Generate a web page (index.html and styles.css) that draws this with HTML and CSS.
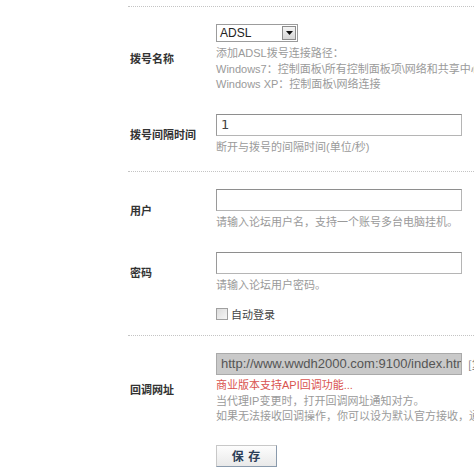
FILE: index.html
```html
<!DOCTYPE html>
<html lang="zh-CN">
<head>
<meta charset="utf-8">
<title>设置</title>
<link rel="stylesheet" href="styles.css">
</head>
<body>
<div class="page">
  <div class="section">
    <div class="row">
      <div class="label">拨号名称</div>
      <div class="field">
        <div class="select">
          <span class="select-value">ADSL</span>
          <span class="select-btn"><svg width="7" height="4" viewBox="0 0 7 4"><path d="M0 0H7L3.5 4Z" fill="#111"/></svg></span>
        </div>
        <div class="hint">添加ADSL拨号连接路径：<br>Windows7：控制面板\所有控制面板项\网络和共享中心。<br>Windows XP：控制面板\网络连接</div>
      </div>
    </div>
    <div class="row gap">
      <div class="label">拨号间隔时间</div>
      <div class="field">
        <input class="text" type="text" value="1">
        <div class="hint">断开与拨号的间隔时间(单位/秒)</div>
      </div>
    </div>
  </div>
  <div class="section">
    <div class="row">
      <div class="label">用户</div>
      <div class="field">
        <input class="text" type="text" value="">
        <div class="hint">请输入论坛用户名，支持一个账号多台电脑挂机。</div>
      </div>
    </div>
    <div class="row gap">
      <div class="label">密码</div>
      <div class="field">
        <input class="text" type="password" value="">
        <div class="hint">请输入论坛用户密码。</div>
      </div>
    </div>
    <div class="row check-row">
      <div class="label"></div>
      <div class="field">
        <label class="check"><span class="box"></span><span>自动登录</span></label>
      </div>
    </div>
  </div>
  <div class="section last">
    <div class="row">
      <div class="label">回调网址</div>
      <div class="field">
        <div class="url-line">
          <div class="url">http://www.wwdh2000.com:9100/index.html</div>
          <span class="copy">[复制]</span>
        </div>
        <div class="hint tight"><span class="red">商业版本支持API回调功能...</span><br>当代理IP变更时，打开回调网址通知对方。<br>如果无法接收回调操作，你可以设为默认官方接收，通过官方接口获取代理IP。</div>
      </div>
    </div>
    <div class="row save-row">
      <div class="label"></div>
      <div class="field">
        <button class="save" type="button">保 存</button>
      </div>
    </div>
  </div>
</div>
</body>
</html>
```

FILE: styles.css
```css
html, body {
  margin: 0;
  padding: 0;
  background: #fff;
  overflow: hidden;
}
body {
  width: 474px;
  height: 473px;
  font-family: "Liberation Sans", "Noto Sans CJK SC", sans-serif;
  font-size: 11px;
  color: #333;
}
.page {
  padding-top: 6px;
  padding-left: 128px;
  width: 600px;
}
.section {
  border-top: 1px dotted #c4c4c4;
  padding-top: 17px;
  padding-bottom: 16px;
}
.row {
  display: grid;
  grid-template-columns: 88px 1fr;
  align-items: center;
}
.row.gap {
  margin-top: 21px;
}
.label {
  padding-left: 2px;
  font-family: "Noto Sans CJK SC", sans-serif;
  font-weight: bold;
  font-size: 11px;
  color: #333;
}
.field {
  min-width: 0;
}
.select {
  position: relative;
  box-sizing: border-box;
  width: 82px;
  height: 18px;
  border: 1px solid #9c9c9c;
  background: #fff;
  font-family: "Liberation Sans", sans-serif;
  font-size: 12px;
  color: #222;
  line-height: 16px;
  padding-left: 3px;
}
.select-btn {
  position: absolute;
  right: 1px;
  top: 1px;
  width: 12px;
  height: 12px;
  border: 1px solid #8c8c8c;
  background: linear-gradient(#f4f4f4, #d6d6d6);
  display: flex;
  align-items: center;
  justify-content: center;
}
.hint {
  margin-top: 4px;
  line-height: 15.5px;
  color: #9a9a9a;
  white-space: nowrap;
  font-size: 11px;
}
.hint.tight {
  margin-top: 3px;
}
.red {
  color: #d9534f;
}
.text {
  display: block;
  box-sizing: border-box;
  width: 246px;
  height: 22px;
  margin: 0;
  border: 1px solid #b5b5b5;
  border-top-color: #8e8e8e;
  border-left-color: #9a9a9a;
  padding: 0 4px;
  font-family: "DejaVu Sans", sans-serif;
  font-size: 13px;
  color: #444;
  background: #fff;
  outline: none;
}
.check-row {
  margin-top: 13px;
}
.section:nth-child(2) {
  padding-bottom: 13px;
}
.check {
  display: flex;
  align-items: center;
  gap: 3px;
  color: #444;
  font-family: "Noto Sans CJK SC", sans-serif;
  font-size: 11px;
  line-height: 16px;
}
.box {
  box-sizing: border-box;
  width: 12px;
  height: 12px;
  border: 1px solid #a0a0a0;
  background: linear-gradient(135deg, #dcdcdc, #f6f6f6);
}
.url-line {
  display: flex;
  align-items: center;
  gap: 6px;
  white-space: nowrap;
}
.url {
  box-sizing: border-box;
  width: 246px;
  height: 22px;
  flex: none;
  border: 1px solid #aaa;
  background: #c9c9c9;
  padding-left: 4px;
  overflow: hidden;
  font-family: "Liberation Sans", sans-serif;
  font-size: 13px;
  line-height: 20px;
  color: #555;
}
.copy {
  color: #777;
  font-size: 11px;
  font-family: "Noto Sans CJK SC", sans-serif;
}
.save-row {
  margin-top: 20px;
}
.save {
  box-sizing: border-box;
  width: 61px;
  height: 22px;
  margin: 0;
  padding: 0;
  border: 1px solid #c8c8c8;
  border-right-color: #8a9aac;
  border-bottom-color: #8a9aac;
  background: linear-gradient(#fdfdfd, #e9e9e9);
  font-family: "Noto Sans CJK SC", sans-serif;
  font-weight: bold;
  font-size: 12px;
  color: #2c3e58;
  letter-spacing: 1px;
}
```
